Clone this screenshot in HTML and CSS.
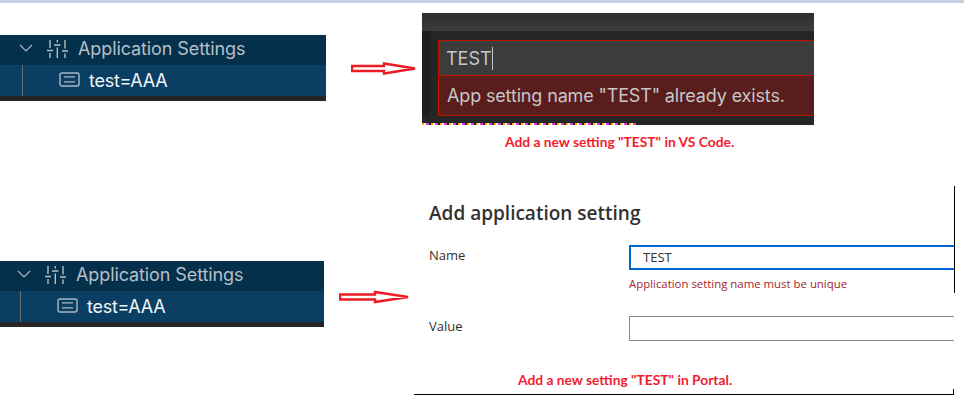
FILE: index.html
```html
<!DOCTYPE html>
<html lang="en">
<head>
    <meta charset="UTF-8">
    <title>App settings</title>
    <link rel="stylesheet" href="styles.css">
</head>
<body>
    <div class="canvas">
        <!-- VS Code tree, top -->
        <div class="tree tree-top">
            <div class="tree-head">
                <svg class="chevron" width="14" height="9" viewBox="0 0 14 9"><path d="M1 1l6 6 6-6" fill="none" stroke="#aab4ba" stroke-width="1.2"/></svg>
                <svg class="sliders" width="21" height="18" viewBox="0 0 21 18"><path d="M3 0v8M3 13v5M10.300 0v2.500M10.300 7.500v10.500M18 0v8.500M18 13.500v5M0 10.500h6M7 5h6.500M15 11h6" fill="none" stroke="#b4bec4" stroke-width="1.400"/></svg>
                <span>Application Settings</span>
            </div>
            <div class="tree-row">
                <i class="guide"></i>
                <svg class="setting" width="21" height="15" viewBox="0 0 21 15"><rect x="1" y="1" width="19" height="13" rx="2" fill="none" stroke="#a8b8c4" stroke-width="1.400"/><path d="M5 4.800h11M5 9.800h11" stroke="#a8b8c4" stroke-width="1.200"/></svg>
                <span>test=AAA</span>
            </div>
        </div>

        <svg class="arrow arrow-top" width="66" height="13" viewBox="0 0 66 13"><path d="M1 4h32V1.500l31 5-31 5V9H1z" fill="#fff" stroke="#ed1c24" stroke-width="2.400"/></svg>

        <!-- VS Code input box -->
        <div class="vscode">
            <div class="vscode-title"></div>
            <div class="vscode-body">
                <div class="vscode-box">
                    <div class="vscode-input">TEST<i class="cursor"></i></div>
                    <div class="vscode-error">App setting name "TEST" already exists.</div>
                </div>
            </div>
            <div class="vscode-noise"></div>
        </div>
        <div class="caption caption-top">Add a new setting "TEST" in VS Code.</div>

        <!-- VS Code tree, bottom -->
        <div class="tree tree-bottom">
            <div class="tree-head">
                <svg class="chevron" width="14" height="9" viewBox="0 0 14 9"><path d="M1 1l6 6 6-6" fill="none" stroke="#aab4ba" stroke-width="1.2"/></svg>
                <svg class="sliders" width="21" height="18" viewBox="0 0 21 18"><path d="M3 0v8M3 13v5M10.300 0v2.500M10.300 7.500v10.500M18 0v8.500M18 13.500v5M0 10.500h6M7 5h6.500M15 11h6" fill="none" stroke="#b4bec4" stroke-width="1.400"/></svg>
                <span>Application Settings</span>
            </div>
            <div class="tree-row">
                <i class="guide"></i>
                <svg class="setting" width="21" height="15" viewBox="0 0 21 15"><rect x="1" y="1" width="19" height="13" rx="2" fill="none" stroke="#a8b8c4" stroke-width="1.400"/><path d="M5 4.800h11M5 9.800h11" stroke="#a8b8c4" stroke-width="1.200"/></svg>
                <span>test=AAA</span>
            </div>
        </div>

        <svg class="arrow arrow-bottom" width="71" height="14" viewBox="0 0 71 14"><path d="M1 4.500h35V2l33 5-33 5V9.500H1z" fill="#fff" stroke="#ed1c24" stroke-width="2.400"/></svg>

        <!-- Portal form -->
        <div class="portal">
            <h2>Add application setting</h2>
            <div class="field">
                <label>Name</label>
                <div class="field-main">
                    <div class="input input-focus">TEST</div>
                    <div class="field-error">Application setting name must be unique</div>
                </div>
            </div>
            <div class="field field-value">
                <label>Value</label>
                <div class="field-main">
                    <div class="input"></div>
                </div>
            </div>
            <div class="caption caption-bottom">Add a new setting "TEST" in Portal.</div>
        </div>
        <i class="rule rule-right"></i>
        <i class="rule rule-corner"></i>
        <i class="rule rule-bottom"></i>
    </div>
</body>
</html>
```

FILE: styles.css
```css
html, body {
    margin: 0;
    background: #fff;
}
.canvas {
    position: relative;
    width: 964px;
    height: 403px;
    overflow: hidden;
    border-top: 3px solid #c5d0e3;
    box-sizing: border-box;
    font-family: "Liberation Sans", Arial, sans-serif;
}

/* tree clips */
.tree {
    position: absolute;
    left: 0;
    height: 66px;
    box-sizing: border-box;
    padding-bottom: 5px;
    background: #252526;
    font-family: Inter, "Liberation Sans", sans-serif;
    font-size: 18px;
}
.tree-top {
    top: 32px;
    width: 326px;
}
.tree-bottom {
    top: 258px;
    width: 324px;
}
.tree-head {
    display: flex;
    align-items: center;
    height: 30px;
    box-sizing: border-box;
    padding: 0 0 3px 19px;
    background: #05304c;
    color: #b6bfc5;
    letter-spacing: -0.1px;
}
.chevron {
    margin-right: 14px;
}
.sliders {
    margin-right: 10px;
}
.tree-bottom .tree-head {
    padding-left: 17px;
}
.tree-row {
    display: flex;
    align-items: center;
    position: relative;
    height: 31px;
    padding-left: 59px;
    background: #0a3f63;
    color: #f2f5f7;
    letter-spacing: -0.25px;
}
.tree-bottom .tree-row {
    padding-left: 57px;
}
.guide {
    position: absolute;
    left: 22px;
    top: 0;
    bottom: 0;
    width: 1px;
    background: #6b6f6e;
}
.tree-bottom .guide {
    left: 20px;
}
.setting {
    margin: 0 9px 2px 0;
}

.arrow {
    position: absolute;
}
.arrow-top {
    left: 351px;
    top: 59px;
}
.arrow-bottom {
    left: 339px;
    top: 287px;
}

/* vs code input */
.vscode {
    position: absolute;
    left: 422px;
    top: 10px;
    width: 392px;
    height: 112px;
    display: flex;
    flex-direction: column;
    background: #252526;
    font-family: Inter, "Liberation Sans", sans-serif;
    font-size: 18px;
    color: #c6c6c6;
}
.vscode-title {
    height: 18px;
    background: linear-gradient(#2e2e2e, #3c3c3c);
}
.vscode-body {
    flex: 1;
    padding: 9px 0 0 16px;
    background: linear-gradient(90deg, #1e1e1e 8px, #252526 8px);
}
.vscode-box {
    border: 1px solid #be1100;
    border-right: 0;
}
.vscode-input {
    display: flex;
    align-items: center;
    height: 34px;
    padding-left: 7px;
    background: #3c3c3c;
    border-bottom: 1px solid #be1100;
}
.cursor {
    width: 1px;
    height: 23px;
    background: #c6c6c6;
}
.vscode-error {
    display: flex;
    align-items: center;
    height: 39px;
    padding-left: 8px;
    background: #5a1d1d;
    letter-spacing: -0.15px;
}
.vscode-noise {
    height: 2px;
    margin-top: 7px;
    width: 215px;
    background: repeating-linear-gradient(90deg, #ffb300 0 2px, #fff 2px 4px, #e838d0 4px 7px, #222 7px 9px);
}

/* captions */
.caption {
    position: absolute;
    font-family: Lato, "Liberation Sans", sans-serif;
    font-size: 13.8px;
    font-weight: 700;
    color: #f01c30;
    white-space: nowrap;
}
.caption-top {
    left: 505px;
    top: 130px;
}

/* portal form */
.portal {
    position: absolute;
    left: 429px;
    top: 197px;
    width: 525px;
    font-family: "Open Sans", "Liberation Sans", sans-serif;
    color: #323130;
}
.portal h2 {
    margin: 0 0 19px;
    font-size: 19px;
    font-weight: 600;
    line-height: 26px;
}
.field {
    display: flex;
    font-size: 13px;
}
.field label {
    width: 200px;
    line-height: 18px;
    padding-top: 1px;
}
.field-main {
    flex: 1;
}
.input {
    height: 25px;
    box-sizing: border-box;
    border: 1px solid #8a8886;
    border-right: 0;
    line-height: 23px;
    padding-left: 12px;
}
.input-focus {
    border: 2px solid #0063cf;
    border-right: 0;
    line-height: 21px;
}
.field-error {
    margin-top: 6px;
    font-size: 11.4px;
    line-height: 16px;
    color: #a4262c;
}
.field-value {
    margin-top: 24px;
}
.caption-bottom {
    left: 89px;
    top: 171px;
}

/* black edges left over from the crop */
.rule {
    position: absolute;
    background: #000;
}
.rule-right {
    left: 954px;
    top: 183px;
    width: 1px;
    height: 107px;
}
.rule-corner {
    left: 953px;
    top: 386px;
    width: 1px;
    height: 5px;
}
.rule-bottom {
    left: 414px;
    top: 391px;
    width: 540px;
    height: 1px;
}
```
